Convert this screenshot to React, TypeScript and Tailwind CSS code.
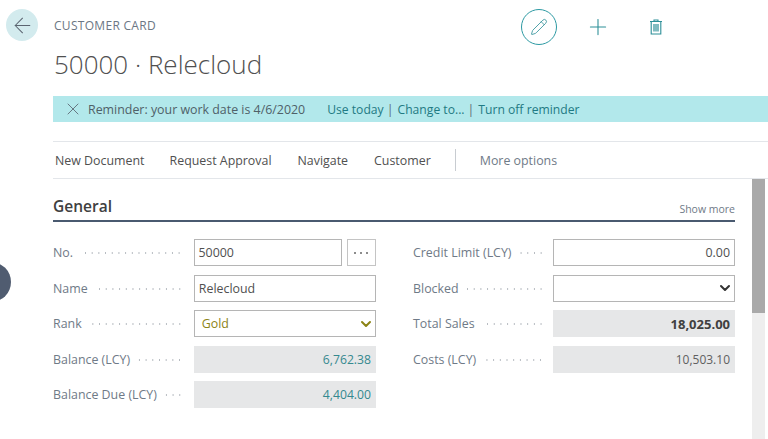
import { ArrowLeft, ChevronDown, Pencil, Plus, X } from 'lucide-react'

function Leader() {
  return (
    <span className="ml-2 h-[2px] flex-1 bg-[radial-gradient(circle,#b4b9bf_0.7px,transparent_0.9px)] bg-[length:6.7px_2px] bg-right bg-repeat-x" />
  )
}

function Label({ text, width }: { text: string; width: string }) {
  return (
    <div className={`flex items-center pt-[2px] text-[12.4px] text-[#6f7a87] ${width}`}>
      <span className="whitespace-nowrap">{text}</span>
      <Leader />
    </div>
  )
}

function Row({ text, width, children }: { text: string; width: string; children: React.ReactNode }) {
  return (
    <div className="flex h-[27px] items-center">
      <Label text={text} width={width} />
      {children}
    </div>
  )
}

function InputBox({ value, className }: { value: string; className?: string }) {
  return (
    <div className={`flex h-[27px] items-center border border-[#b5b5b5] bg-white px-[4px] pt-[2px] text-[12.4px] text-[#505050] ${className ?? ''}`}>
      {value}
    </div>
  )
}

function ReadOnly({ value, className }: { value: string; className?: string }) {
  return (
    <div className={`flex h-[27px] w-[181.5px] items-center justify-end bg-[#e6e7e8] pl-[5px] pr-[4.5px] pt-[2px] ${className ?? ''}`}>
      {value}
    </div>
  )
}

export default function App() {
  return (
    <div className="relative h-[439px] w-[768px] overflow-hidden bg-white font-['Open_Sans','Noto_Sans',sans-serif]">
      {/* floating handle on the left edge */}
      <div className="absolute left-[-29px] top-[262px] h-[40px] w-[40px] rounded-full bg-[#505c70]" />

      {/* Header */}
      <div className="flex h-[96px]">
        <div className="w-[53px] pl-[6px] pt-[9px]">
          <div className="flex h-[32px] w-[32px] items-center justify-center rounded-full bg-[#d3ebee]">
            <ArrowLeft className="h-[25px] w-[25px] text-[#5a6470]" strokeWidth={1} />
          </div>
        </div>
        <div className="w-[468px] pl-[1px] pt-[18px]">
          <p className="text-[12px] font-medium leading-[16px] tracking-[0.3px] text-[#6b7684]">CUSTOMER CARD</p>
          <h1 className="mt-[13px] text-[26px] font-light leading-[34px] text-[#505050]">50000 · Relecloud</h1>
        </div>
        <div className="flex items-start pt-[9px]">
          <div className="flex h-[36px] w-[36px] items-center justify-center rounded-full border border-[#2d9aa3]">
            <Pencil className="h-[18px] w-[18px] text-[#2d8f98]" strokeWidth={1.1} />
          </div>
          <Plus className="ml-[27.5px] mt-[5px] h-[26px] w-[26px] text-[#2d8f98]" strokeWidth={1} />
          <svg viewBox="0 0 14 16" className="ml-[38px] mt-[10px] h-[16px] w-[14px] text-[#2d8f98]" fill="none" stroke="currentColor" strokeWidth="1.1">
            <path d="M1 2.5h12M5 2.5V1h4v1.5M2.2 2.5v12.5h9.6V2.5" />
            <path d="M5 5v7.5M7 5v7.5M9 5v7.5" strokeWidth="1.2" />
          </svg>
        </div>
      </div>

      {/* Reminder banner */}
      <div className="ml-[53px] flex h-[26px] items-center bg-[#b2e8eb] pl-[10px] pt-[2px] text-[12.4px]">
        <X className="-mt-[2px] h-[20px] w-[20px] text-[#5f6d78]" strokeWidth={1.1} />
        <span className="ml-[5px] text-[#4f6068]">Reminder: your work date is 4/6/2020</span>
        <span className="ml-[22px] text-[12.15px] text-[#1f7a83]">Use today</span>
        <span className="ml-[3px] text-[#5f6d78]">|</span>
        <span className="ml-[4px] text-[12.15px] text-[#1f7a83]">Change to...</span>
        <span className="ml-[3px] text-[#5f6d78]">|</span>
        <span className="ml-[4px] text-[12.15px] text-[#1f7a83]">Turn off reminder</span>
      </div>

      {/* Command bar */}
      <div className="ml-[53px] mt-[19px] flex h-[38px] items-center border-y border-[#e3e6ea] pl-[2px] pt-[2px] text-[12.4px] text-[#505050]">
        <span>New Document</span>
        <span className="ml-[25px]">Request Approval</span>
        <span className="ml-[26px]">Navigate</span>
        <span className="ml-[26px]">Customer</span>
        <span className="-mt-[2px] ml-[24px] h-[22px] w-px bg-[#c8ccd1]" />
        <span className="ml-[24px] text-[#6f7a87]">More options</span>
      </div>

      {/* Body */}
      <div className="flex h-[261px]">
        <div className="ml-[53px] w-[682px]">
          <div className="flex h-[43px] items-end justify-between border-b-2 border-[#4a5a70] pb-[4px]">
            <span className="text-[15.5px] font-semibold leading-[20px] text-[#404040]">General</span>
            <span className="-mb-[2px] text-[10.5px] text-[#6f7a87]">Show more</span>
          </div>

          <div className="mt-[17px] flex">
            <div className="flex w-[322.5px] flex-col gap-[8.5px]">
              <Row text="No." width="w-[130px]">
                <div className="ml-[11px] flex gap-[5px]">
                  <InputBox value="50000" className="w-[148px]" />
                  <div className="flex h-[27px] w-[29px] items-center justify-center gap-[4px] border border-[#c4c4c4]">
                    <span className="h-[2px] w-[2px] rounded-full bg-[#666666]" />
                    <span className="h-[2px] w-[2px] rounded-full bg-[#666666]" />
                    <span className="h-[2px] w-[2px] rounded-full bg-[#666666]" />
                  </div>
                </div>
              </Row>
              <Row text="Name" width="w-[130px]">
                <InputBox value="Relecloud" className="ml-[11px] w-[182px]" />
              </Row>
              <Row text="Rank" width="w-[130px]">
                <div className="ml-[11px] flex h-[27px] w-[182px] items-center justify-between border border-[#b5b5b5] pl-[7px] pr-[1px] pt-[2px] text-[12.4px] text-[#8c8416]">
                  Gold
                  <ChevronDown className="-mt-[2px] h-[16px] w-[16px] text-[#8c8416]" strokeWidth={3} />
                </div>
              </Row>
              <Row text="Balance (LCY)" width="w-[130px]">
                <ReadOnly value="6,762.38" className="ml-[11px] text-[12.2px] text-[#35898f]" />
              </Row>
              <Row text="Balance Due (LCY)" width="w-[130px]">
                <ReadOnly value="4,404.00" className="ml-[11px] text-[12.2px] text-[#35898f]" />
              </Row>
            </div>
            <div className="ml-[37.5px] flex flex-col gap-[8.5px]">
              <Row text="Credit Limit (LCY)" width="w-[131px]">
                <InputBox value="0.00" className="ml-[9px] w-[182px] justify-end" />
              </Row>
              <Row text="Blocked" width="w-[131px]">
                <div className="ml-[9px] flex h-[27px] w-[182px] items-center justify-end border border-[#b5b5b5] pr-[1px]">
                  <ChevronDown className="h-[16px] w-[16px] text-[#333333]" strokeWidth={3} />
                </div>
              </Row>
              <Row text="Total Sales" width="w-[131px]">
                <ReadOnly value="18,025.00" className="ml-[9px] text-[13px] font-bold text-[#404040]" />
              </Row>
              <Row text="Costs (LCY)" width="w-[131px]">
                <ReadOnly value="10,503.10" className="ml-[9px] text-[12px] text-[#606060]" />
              </Row>
            </div>
          </div>
        </div>

        {/* Scrollbar */}
        <div className="ml-[17px] h-full w-[13px] bg-[#eeeeee]">
          <div className="h-[134px] bg-[#a9a9a9]" />
        </div>
      </div>
    </div>
  )
}
